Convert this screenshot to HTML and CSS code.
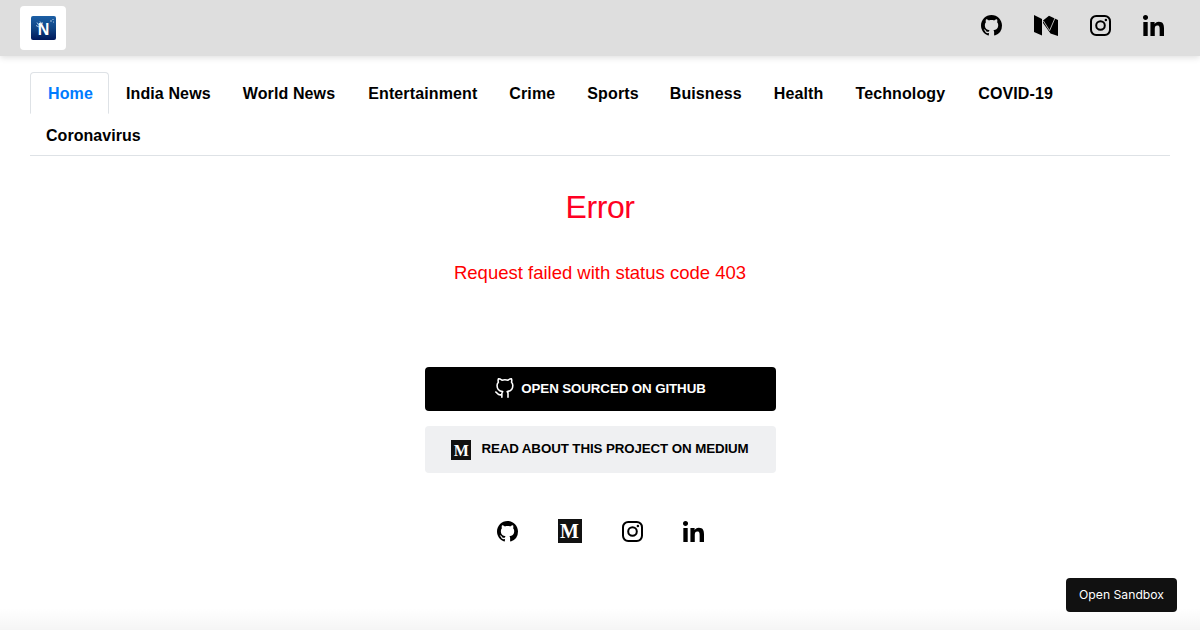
FILE: index.html
```html
<!DOCTYPE html>
<html lang="en">
<head>
<meta charset="utf-8">
<title>News</title>
<link rel="stylesheet" href="styles.css">
</head>
<body>
<svg class="defs" width="0" height="0" aria-hidden="true">
  <symbol id="gh" viewBox="0 0 16 16"><path d="M8 0C3.58 0 0 3.58 0 8c0 3.54 2.29 6.53 5.47 7.59.4.07.55-.17.55-.38 0-.19-.01-.82-.01-1.49-2.01.37-2.53-.49-2.69-.94-.09-.23-.48-.94-.82-1.13-.28-.15-.68-.52-.01-.53.63-.01 1.08.58 1.23.82.72 1.21 1.87.87 2.33.66.07-.52.28-.87.51-1.07-1.78-.2-3.64-.89-3.64-3.95 0-.87.31-1.59.82-2.15-.08-.2-.36-1.02.08-2.12 0 0 .67-.21 2.2.82.64-.18 1.32-.27 2-.27.68 0 1.36.09 2 .27 1.53-1.04 2.2-.82 2.2-.82.44 1.1.16 1.92.08 2.12.51.56.82 1.27.82 2.15 0 3.07-1.87 3.75-3.65 3.95.29.25.54.73.54 1.48 0 1.07-.01 1.93-.01 2.2 0 .21.15.46.55.38A8.013 8.013 0 0016 8c0-4.42-3.58-8-8-8z"/></symbol>
  <symbol id="ig" viewBox="0 0 21 21"><rect x="1" y="1" width="19" height="19" rx="5.2" fill="none" stroke="currentColor" stroke-width="2"/><circle cx="10.5" cy="10.5" r="4.3" fill="none" stroke="currentColor" stroke-width="2"/><circle cx="15.9" cy="5.1" r="1.25"/></symbol>
  <symbol id="li" viewBox="0 0 448 448"><path d="M100.28 448H7.4V148.9h92.88zM53.79 108.1C24.09 108.1 0 83.5 0 53.8a53.79 53.79 0 0 1 107.58 0c0 29.7-24.1 54.3-53.79 54.3zM447.9 448h-92.68V302.4c0-34.7-.7-79.2-48.29-79.2-48.29 0-55.69 37.7-55.69 76.7V448h-92.78V148.9h89.08v40.8h1.3c12.4-23.5 42.69-48.3 87.88-48.3 94 0 111.28 61.9 111.28 142.3V448z"/></symbol>
</svg>
<header class="topbar">
  <a class="logo-box" href="#">
    <span class="logo">
      <svg class="logo-art" viewBox="0 0 25 24"><path d="M6 6.5l2 3M9 5.5l1 3M5 9.5l3 1.5M11 6l.3 2" stroke="#cfe0f0" stroke-width=".8" fill="none"/><circle cx="20" cy="5" r=".7" fill="#cfe0f0"/><circle cx="22" cy="3.5" r=".6" fill="#cfe0f0"/><circle cx="22.5" cy="6" r=".5" fill="#cfe0f0"/></svg>
      N
    </span>
  </a>
  <nav class="top-icons">
    <svg class="ico"><use href="#gh"/></svg>
    <svg class="ico ico-wide" viewBox="0 0 24 21"><path d="M0 0 8 4V20.5L0 17zM9 5.5 15 .8 24 5V21L16.5 18.5 9 8z"/><path d="M9.3 5.8 15.6 15.6 21 3" fill="none" stroke="#dedede" stroke-width=".8"/></svg>
    <svg class="ico"><use href="#ig"/></svg>
    <svg class="ico"><use href="#li"/></svg>
  </nav>
</header>
<ul class="tabs">
  <li class="tab active">Home</li>
  <li class="tab">India News</li>
  <li class="tab tab-wide">World News</li>
  <li class="tab">Entertainment</li>
  <li class="tab">Crime</li>
  <li class="tab tab-narrow">Sports</li>
  <li class="tab">Buisness</li>
  <li class="tab">Health</li>
  <li class="tab tab-wide">Technology</li>
  <li class="tab">COVID-19</li>
  <li class="tab tab-plain">Coronavirus</li>
</ul>
<main class="content">
  <h1 class="err-title">Error</h1>
  <p class="err-msg">Request failed with status code 403</p>
  <a class="btn btn-dark" href="#">
    <svg class="btn-ico" viewBox="0 0 24 24"><path d="M9 19c-5 1.5-5-2.5-7-3m14 6v-3.87a3.37 3.37 0 0 0-.94-2.61c3.14-.35 6.44-1.54 6.44-7A5.44 5.44 0 0 0 20 4.77 5.07 5.07 0 0 0 19.91 1S18.73.65 16 2.48a13.38 13.38 0 0 0-7 0C6.27.65 5.09 1 5.09 1A5.07 5.07 0 0 0 5 4.77a5.44 5.44 0 0 0-1.5 3.75c0 5.42 3.3 6.61 6.44 7A3.37 3.37 0 0 0 9 18.13V22"/></svg>
    <span>OPEN SOURCED ON GITHUB</span>
  </a>
  <a class="btn btn-light" href="#"><span class="m-square">M</span><span class="btn-label">READ ABOUT THIS PROJECT ON MEDIUM</span></a>
  <div class="bottom-icons">
    <svg class="ico"><use href="#gh"/></svg>
    <span class="m-square m-big">M</span>
    <svg class="ico"><use href="#ig"/></svg>
    <svg class="ico"><use href="#li"/></svg>
  </div>
</main>
<div class="foot"></div>
<a class="sandbox" href="#">Open Sandbox</a>
</body>
</html>
```
FILE: styles.css
```css
html, body { margin: 0; padding: 0; }
body {
  width: 1200px;
  height: 630px;
  overflow: hidden;
  position: relative;
  background: #fff;
  color: #000;
  font-family: "Liberation Sans", Arial, sans-serif;
  font-size: 16px;
}
a { text-decoration: none; color: inherit; }
.defs { position: absolute; }
.topbar {
  height: 56px;
  background: #dedede;
  box-shadow: 0 2px 6px rgba(0,0,0,.12);
  display: flex;
  align-items: center;
  justify-content: space-between;
  padding: 0 36px 0 20px;
}
.logo-box {
  width: 46px;
  height: 44px;
  background: #fff;
  border-radius: 4px;
  display: flex;
  align-items: center;
  justify-content: center;
}
.logo {
  position: relative;
  width: 25px;
  height: 24px;
  border-radius: 2px;
  background: linear-gradient(#1c5fa5, #0f4585 50%, #00185a);
  color: #fff;
  font: bold 16px/27px "Liberation Sans", sans-serif;
  text-align: center;
  box-sizing: border-box;
  padding-left: 1px;
}
.logo-art { position: absolute; left: 0; top: 0; width: 25px; height: 24px; }
.top-icons { display: flex; gap: 32px; align-items: center; margin-bottom: 5px; }
.ico { width: 21px; height: 21px; fill: currentColor; color: #000; }
.ico-wide { width: 24px; }
.tabs {
  list-style: none;
  margin: 16px 30px 0;
  padding: 0;
  display: flex;
  flex-wrap: wrap;
  box-shadow: inset 0 -1px 0 #dee2e6;
}
.tab {
  height: 42px;
  box-sizing: border-box;
  padding: 10px 16px 6px;
  line-height: 24px;
  font-weight: 700;
  letter-spacing: .12px;
}
.tab-wide { padding-right: 17px; }
.tab-narrow { padding-right: 15px; }
.tab-plain { letter-spacing: .05px; }
.tab.active {
  color: #007bff;
  padding: 9px 15px 6px 17px;
  margin-right: 1px;
  border: 1px solid #dee2e6;
  border-bottom-color: #fff;
  border-radius: 4px 4px 0 0;
}
.content { display: flex; flex-direction: column; align-items: center; }
.err-title {
  margin: 32px 0 0;
  font-size: 32px;
  line-height: 38px;
  font-weight: 400;
  letter-spacing: -.4px;
  color: #ff0023;
}
.err-msg {
  margin: 33px 0 0;
  font-size: 18.5px;
  line-height: 27px;
  color: #f00;
}
.btn {
  width: 351px;
  box-sizing: border-box;
  display: flex;
  align-items: center;
  justify-content: center;
  border-radius: 4px;
  font-size: 13.33px;
  letter-spacing: -.1px;
  font-weight: 700;
}
.btn-dark { margin-top: 81px; height: 44px; background: #000; color: #fff; gap: 6px; padding-bottom: 2px; }
.btn-light { margin-top: 15px; height: 47px; background: #eff0f2; color: #000; gap: 10px; }
.btn-label { margin-bottom: 3px; }
.btn-ico { width: 21px; height: 21px; fill: none; stroke: #fff; stroke-width: 1.8; stroke-linecap: round; stroke-linejoin: round; }
.m-square {
  width: 20px;
  height: 20px;
  background: #111;
  color: #fff;
  font: bold 16px/21px "Liberation Serif", serif;
  letter-spacing: 0;
  text-align: center;
}
.bottom-icons { margin-top: 46px; display: flex; gap: 40px; align-items: center; }
.m-big { width: 24px; height: 24px; font-size: 20px; line-height: 25px; }
.foot {
  position: absolute;
  left: 0; right: 0; bottom: 0;
  height: 22px;
  background: linear-gradient(rgba(0,0,0,0), rgba(0,0,0,.04));
}
.sandbox {
  position: absolute;
  right: 23px;
  bottom: 18px;
  width: 111px;
  height: 34px;
  background: #111;
  border-radius: 4px;
  color: #fff;
  font: 400 12.2px/34px Inter, sans-serif;
  text-align: center;
}
```
